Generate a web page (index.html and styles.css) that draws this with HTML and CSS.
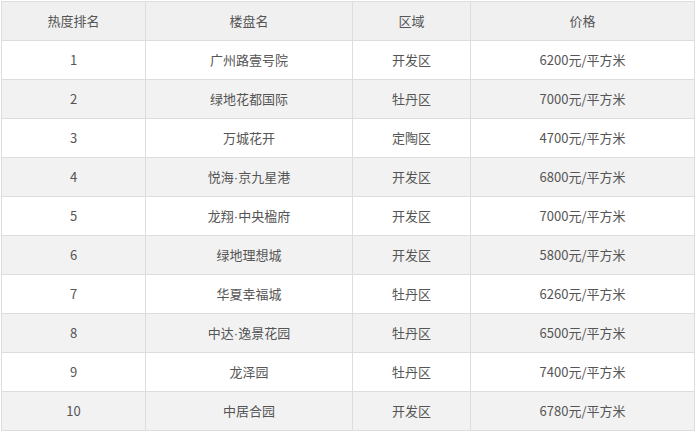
FILE: index.html
```html
<!DOCTYPE html>
<html lang="zh">
<head>
<meta charset="utf-8">
<link rel="stylesheet" href="styles.css">
</head>
<body>
<table class="rank">
  <colgroup>
    <col class="c1"><col class="c2"><col class="c3"><col class="c4">
  </colgroup>
  <thead>
    <tr><th>热度排名</th><th>楼盘名</th><th>区域</th><th>价格</th></tr>
  </thead>
  <tbody>
    <tr><td>1</td><td>广州路壹号院</td><td>开发区</td><td>6200元/平方米</td></tr>
    <tr><td>2</td><td>绿地花都国际</td><td>牡丹区</td><td>7000元/平方米</td></tr>
    <tr><td>3</td><td>万城花开</td><td>定陶区</td><td>4700元/平方米</td></tr>
    <tr><td>4</td><td>悦海<span class="dot">·</span>京九星港</td><td>开发区</td><td>6800元/平方米</td></tr>
    <tr><td>5</td><td>龙翔<span class="dot">·</span>中央楹府</td><td>开发区</td><td>7000元/平方米</td></tr>
    <tr><td>6</td><td>绿地理想城</td><td>开发区</td><td>5800元/平方米</td></tr>
    <tr><td>7</td><td>华夏幸福城</td><td>牡丹区</td><td>6260元/平方米</td></tr>
    <tr><td>8</td><td>中达<span class="dot">·</span>逸景花园</td><td>牡丹区</td><td>6500元/平方米</td></tr>
    <tr><td>9</td><td>龙泽园</td><td>牡丹区</td><td>7400元/平方米</td></tr>
    <tr><td>10</td><td>中居合园</td><td>开发区</td><td>6780元/平方米</td></tr>
  </tbody>
</table>
</body>
</html>
```
FILE: styles.css
```css
html, body {
  margin: 0;
  background: #ffffff;
}
body {
  padding: 1px 0 0 1px;
  font-family: "Noto Sans CJK SC", "Noto Sans", sans-serif;
  font-size: 13px;
  color: #555555;
}
.rank {
  border-collapse: collapse;
  table-layout: fixed;
  width: 693px;
}
.c1 { width: 144px; }
.c2 { width: 207px; }
.c3 { width: 118px; }
.c4 { width: 224px; }
.rank th,
.rank td {
  border: 1px solid #dddddd;
  height: 38px;
  padding: 0;
  text-align: center;
  vertical-align: middle;
  font-weight: normal;
  line-height: 20px;
}
.rank thead th {
  background: #f0f0f0;
}
.rank tbody tr:nth-child(even) td {
  background: #f2f2f2;
}
.dot {
  font-family: "Liberation Sans", sans-serif;
}
```
